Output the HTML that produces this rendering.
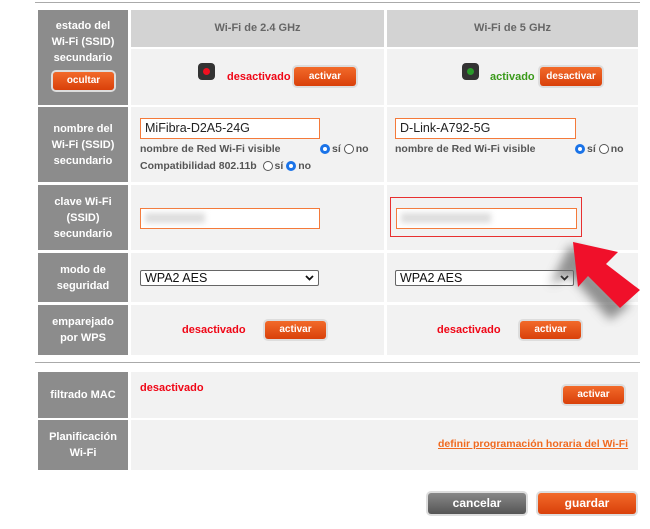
<!DOCTYPE html>
<html><head><meta charset="utf-8"><style>
body{margin:0;width:650px;height:529px;background:#fff;position:relative;font-family:"Liberation Sans",Arial,sans-serif;font-weight:bold;overflow:hidden}
.a{position:absolute;box-sizing:border-box}
.l{background:#8c8c8c;color:#fff;font-size:11px;line-height:16px;text-align:center;display:flex;flex-direction:column;justify-content:center;align-items:center}
.c{background:#f2f2f2}
.h{background:#d3d3d3;color:#666;font-size:11px;text-align:center;line-height:37px}
.btn{position:absolute;background:linear-gradient(#f26a2a,#d9400a);color:#fff;font-size:10px;text-align:center;border-radius:3px;box-shadow:0 0 0 2px #ddd}
.red{color:#f00616;font-size:11px;position:absolute}
.inp{position:absolute;box-sizing:border-box;background:#fff;border:1.5px solid #f47a3a;font-size:12.5px;font-weight:normal;color:#222;padding-left:4px;line-height:18px}
.t{position:absolute;font-size:10.5px;color:#555}
.r{display:inline-block;width:10px;height:10px;border:1px solid #555;border-radius:50%;vertical-align:-2px;margin-right:2px;box-sizing:border-box;background:#fff}
.r.on{border:3px solid #1a73e8;background:#fff}
.sel{position:absolute;box-sizing:border-box;background:#fff;border:1px solid #666;border-radius:2px;font-size:12.5px;font-weight:normal;color:#111;padding-left:4px;line-height:14px}
.sel svg{position:absolute;right:4px;top:4px}
.led{position:absolute;width:17px;height:17px;background:#333;border-radius:4px}
.led i{position:absolute;left:5px;top:5px;width:7px;height:7px;border-radius:50%}
</style></head><body>
<div class="a" style="left:35px;top:2px;width:605px;height:1px;background:#aaa"></div>

<div class="a l" style="left:38px;top:10px;width:90px;height:95px;justify-content:flex-start;padding-top:8px">estado del<br>Wi-Fi (SSID)<br>secundario</div>
<div class="btn" style="left:53px;top:72px;width:61px;height:18px;line-height:18px">ocultar</div>
<div class="a h" style="left:131px;top:10px;width:253px;height:37px">Wi-Fi de 2.4 GHz</div>
<div class="a h" style="left:387px;top:10px;width:251px;height:37px">Wi-Fi de 5 GHz</div>
<div class="a c" style="left:131px;top:49px;width:253px;height:56px"></div>
<div class="a c" style="left:387px;top:49px;width:251px;height:56px"></div>
<div class="led" style="left:198px;top:63px"><i style="background:#f01020"></i></div>
<div class="red" style="left:227px;top:71px">desactivado</div>
<div class="btn" style="left:294px;top:67px;width:62px;height:19px;line-height:19px">activar</div>
<div class="led" style="left:462px;top:63px"><i style="background:#2a9a2a"></i></div>
<div class="red" style="left:490px;top:71px;color:#3a9a1a">activado</div>
<div class="btn" style="left:540px;top:67px;width:62px;height:19px;line-height:19px">desactivar</div>

<div class="a l" style="left:38px;top:107px;width:90px;height:75px">nombre del<br>Wi-Fi (SSID)<br>secundario</div>
<div class="a c" style="left:131px;top:107px;width:253px;height:75px"></div>
<div class="a c" style="left:387px;top:107px;width:251px;height:75px"></div>
<div class="inp" style="left:140px;top:118px;width:180px;height:21px">MiFibra-D2A5-24G</div>
<div class="t" style="left:140px;top:143px">nombre de Red Wi-Fi visible</div>
<div class="t" style="left:320px;top:143px"><span class="r on"></span>sí <span class="r"></span>no</div>
<div class="t" style="left:140px;top:160px">Compatibilidad 802.11b &nbsp;<span class="r"></span>sí <span class="r on"></span>no</div>
<div class="inp" style="left:395px;top:118px;width:181px;height:21px">D-Link-A792-5G</div>
<div class="t" style="left:395px;top:143px">nombre de Red Wi-Fi visible</div>
<div class="t" style="left:575px;top:143px"><span class="r on"></span>sí <span class="r"></span>no</div>

<div class="a l" style="left:38px;top:185px;width:90px;height:65px">clave Wi-Fi<br>(SSID)<br>secundario</div>
<div class="a c" style="left:131px;top:185px;width:253px;height:65px"></div>
<div class="a c" style="left:387px;top:185px;width:251px;height:65px"></div>
<div class="inp" style="left:140px;top:208px;width:180px;height:21px"><span style="display:inline-block;width:60px;height:10px;background:#ddd;filter:blur(3px);margin-top:4px"></span></div>
<div class="a" style="left:390px;top:197px;width:192px;height:40px;border:1.5px solid #e83030"></div>
<div class="inp" style="left:396px;top:208px;width:181px;height:21px"><span style="display:inline-block;width:90px;height:10px;background:#ddd;filter:blur(3px);margin-top:4px"></span></div>

<div class="a l" style="left:38px;top:253px;width:90px;height:49px">modo de<br>seguridad</div>
<div class="a c" style="left:131px;top:253px;width:253px;height:49px"></div>
<div class="a c" style="left:387px;top:253px;width:251px;height:49px"></div>
<div class="sel" style="left:140px;top:270px;width:179px;height:16px">WPA2 AES<svg width="9" height="6"><path d="M1 1L4.5 4.5L8 1" stroke="#111" stroke-width="1.8" fill="none"/></svg></div>
<div class="sel" style="left:395px;top:270px;width:179px;height:16px">WPA2 AES<svg width="9" height="6"><path d="M1 1L4.5 4.5L8 1" stroke="#111" stroke-width="1.8" fill="none"/></svg></div>

<div class="a l" style="left:38px;top:305px;width:90px;height:50px">emparejado<br>por WPS</div>
<div class="a c" style="left:131px;top:305px;width:253px;height:50px"></div>
<div class="a c" style="left:387px;top:305px;width:251px;height:50px"></div>
<div class="red" style="left:182px;top:324px">desactivado</div>
<div class="btn" style="left:265px;top:321px;width:61px;height:18px;line-height:18px">activar</div>
<div class="red" style="left:437px;top:324px">desactivado</div>
<div class="btn" style="left:520px;top:321px;width:61px;height:18px;line-height:18px">activar</div>

<svg class="a" style="left:540px;top:230px" width="110" height="100"><defs><filter id="f"><feGaussianBlur stdDeviation="5"/></filter></defs>
<polygon points="10,55 30,45 70,90 90,75 50,40 62,28 30,15" fill="#666" opacity=".7" filter="url(#f)"/>
<polygon points="33,12 78,22 66,34 100,60 80,78 48,46 38,57" fill="#f0102a"/></svg>

<div class="a" style="left:35px;top:362px;width:605px;height:1px;background:#aaa"></div>
<div class="a l" style="left:38px;top:372px;width:90px;height:46px">filtrado MAC</div>
<div class="a c" style="left:131px;top:372px;width:507px;height:46px"></div>
<div class="red" style="left:140px;top:382px">desactivado</div>
<div class="btn" style="left:563px;top:386px;width:61px;height:18px;line-height:18px">activar</div>
<div class="a l" style="left:38px;top:420px;width:90px;height:50px">Planificación<br>Wi-Fi</div>
<div class="a c" style="left:131px;top:420px;width:507px;height:50px"></div>
<div class="a" style="left:438px;top:438px;font-size:10.5px;color:#f06a20;text-decoration:underline">definir programación horaria del Wi-Fi</div>

<div class="btn" style="left:428px;top:493px;width:98px;height:21px;line-height:21px;font-size:12px;background:linear-gradient(#888,#555)">cancelar</div>
<div class="btn" style="left:538px;top:493px;width:98px;height:21px;line-height:21px;font-size:12px">guardar</div>
</body></html>
